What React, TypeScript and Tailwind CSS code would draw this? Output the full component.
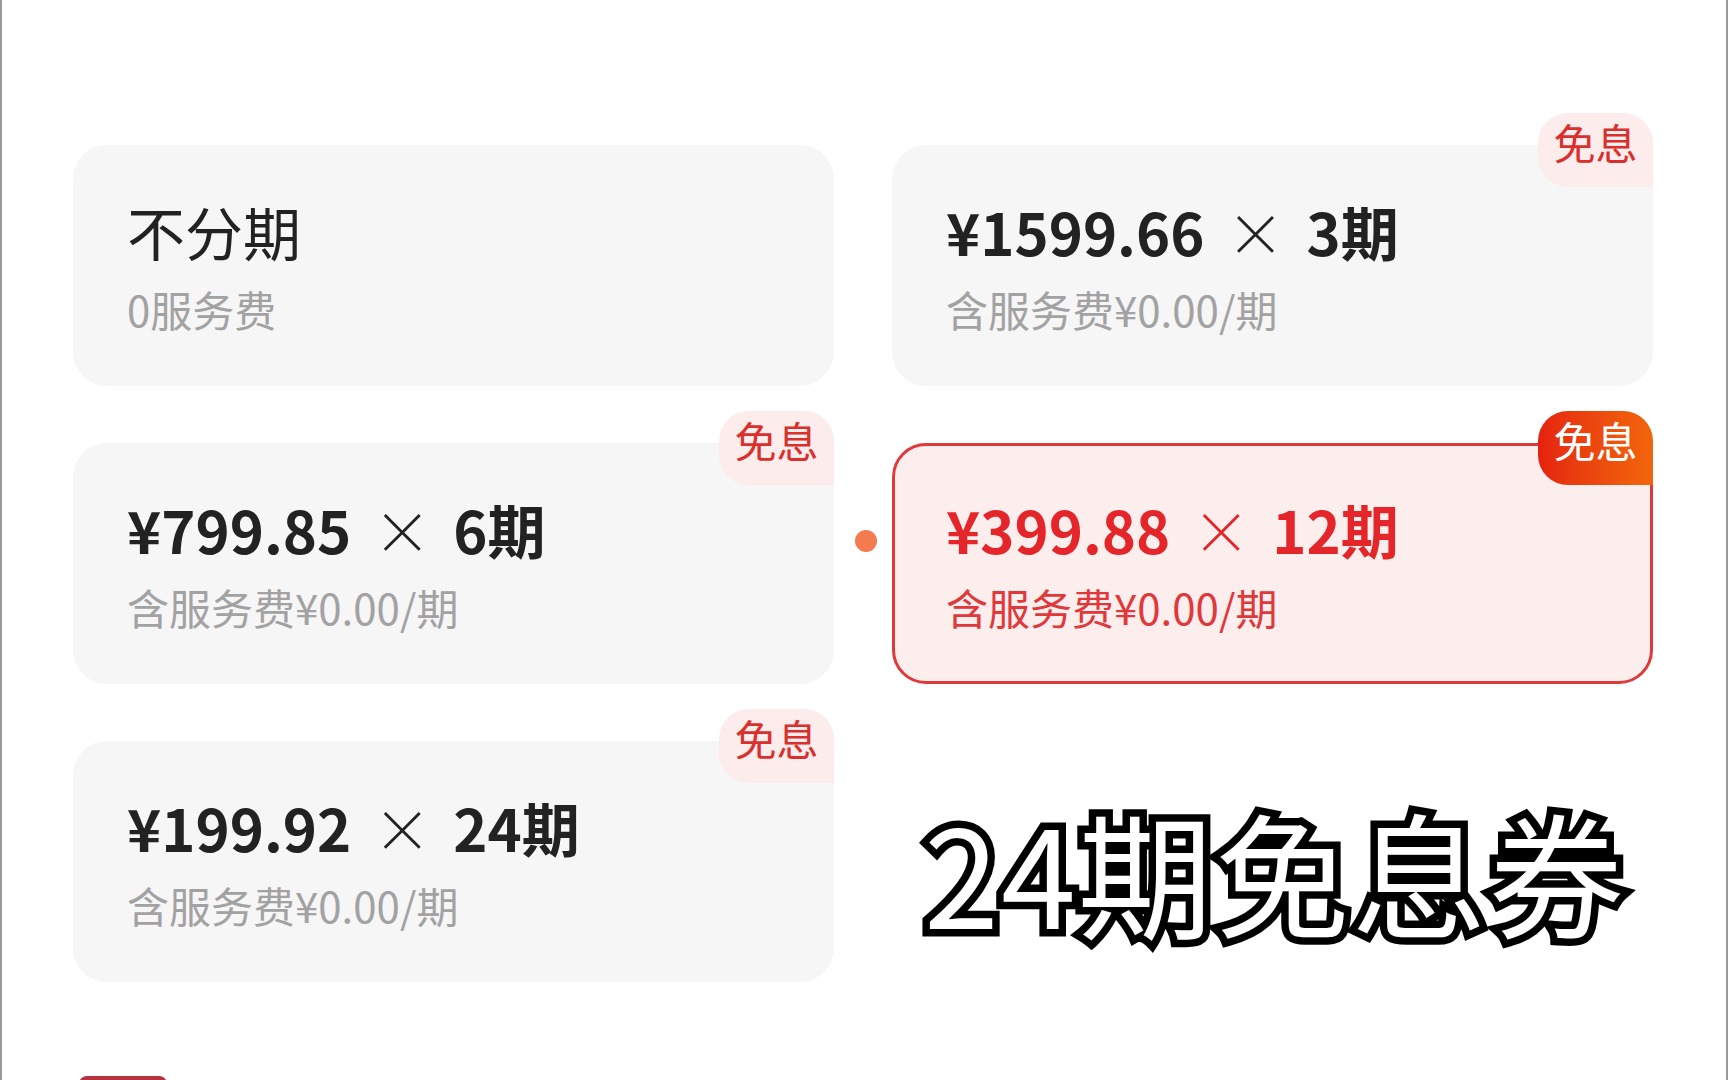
import type { ReactNode } from 'react';

type Plan = {
  price?: string;
  periods?: string;
  title?: string;
  sub: string;
  badge?: boolean;
  selected?: boolean;
};

const plans: Plan[] = [
  { title: '不分期', sub: '0服务费' },
  { price: '¥1599.66', periods: '3期', sub: '含服务费¥0.00/期', badge: true },
  { price: '¥799.85', periods: '6期', sub: '含服务费¥0.00/期', badge: true },
  { price: '¥399.88', periods: '12期', sub: '含服务费¥0.00/期', badge: true, selected: true },
  { price: '¥199.92', periods: '24期', sub: '含服务费¥0.00/期', badge: true },
];

function Badge({ selected }: { selected?: boolean }) {
  return (
    <div
      className={`absolute right-0 top-[-32px] flex h-[74px] w-[115px] items-start justify-center rounded-t-[30px] rounded-bl-[30px] pt-[3px] text-[42px] leading-[52px] ${
        selected
          ? 'right-[-3px] top-[-35px] bg-gradient-to-r from-[#e5200f] to-[#f2650c] text-white'
          : 'bg-[#fdecec] text-[#d9302e]'
      }`}
    >
      免息
    </div>
  );
}

function PlanCard({ plan }: { plan: Plan }) {
  const sel = plan.selected;
  let heading: ReactNode;
  if (plan.title) {
    heading = <span className="font-normal">{plan.title}</span>;
  } else {
    heading = (
      <>
        <span className="font-bold">{plan.price}</span>
        <span className="px-[22px] font-light">×</span>
        <span className="font-bold">{plan.periods}</span>
      </>
    );
  }

  return (
    <div
      className={`relative flex h-[241px] flex-col justify-center rounded-[34px] ${
        sel ? 'border-[3px] border-[#e0393b] bg-[#fdeeee] pl-[51px]' : 'bg-[#f6f6f6] pl-[54px]'
      }`}
    >
      {plan.badge && <Badge selected={sel} />}
      {sel && (
        <div className="absolute left-[-40px] top-[84px] h-[22px] w-[22px] rounded-full bg-[#f37b4f]" />
      )}
      <div className={`whitespace-nowrap text-[58px] leading-[64px] ${sel ? 'text-[#e4262a]' : 'text-[#222222]'}`}>
        {heading}
      </div>
      <div className={`mt-[22px] text-[42px] leading-[48px] ${sel ? 'text-[#e0393b]' : 'text-[#a2a2a2]'}`}>
        {plan.sub}
      </div>
    </div>
  );
}

export default function App() {
  return (
    <div
      className="h-[1080px] w-full overflow-hidden border-x-2 border-[#9a9a9a] bg-white"
      style={{ fontFamily: '"Noto Sans CJK SC", "Noto Sans", sans-serif' }}
    >
      <div className="grid grid-cols-[761px_761px] gap-x-[58px] gap-y-[57px] pl-[71px] pt-[145px]">
        {plans.map((p, i) => (
          <PlanCard key={i} plan={p} />
        ))}
        <div className="flex items-center pl-[32px] pt-[18px]">
          <span className="whitespace-nowrap text-[135px] font-normal leading-none tracking-[2px] text-white [-webkit-text-stroke:15px_black] [paint-order:stroke_fill]">
            24期免息券
          </span>
        </div>
      </div>
      <div className="ml-[77px] mt-[94px] h-[40px] w-[88px] rounded-t-[8px] bg-[#b8323e]" />
    </div>
  );
}
